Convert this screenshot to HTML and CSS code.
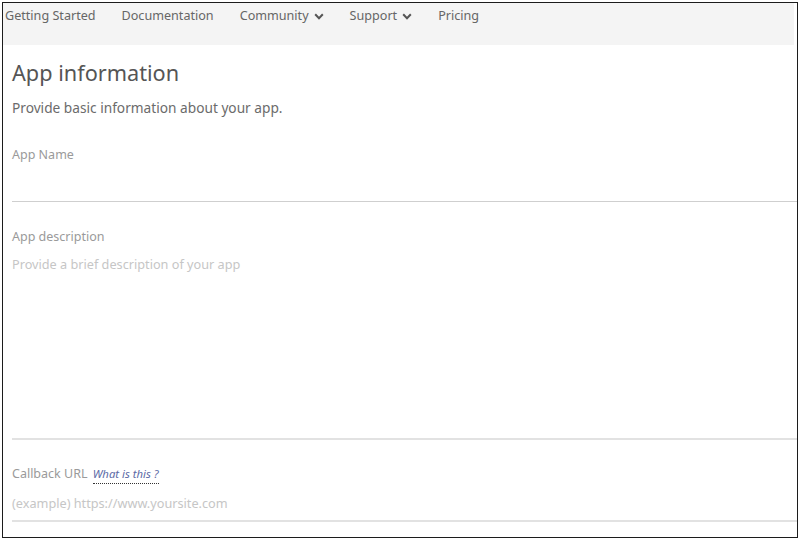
FILE: index.html
```html
<!DOCTYPE html>
<html lang="en">
<head>
<meta charset="utf-8">
<title>App information</title>
<link rel="stylesheet" href="styles.css">
</head>
<body>
<div class="frame">
  <nav class="nav">
    <a class="nav-item">Getting Started</a>
    <a class="nav-item">Documentation</a>
    <a class="nav-item">Community <svg class="chev" viewBox="0 0 10 7" width="10" height="7"><polyline points="1.2,1.3 5,5.2 8.8,1.3" fill="none" stroke="#555" stroke-width="2"/></svg></a>
    <a class="nav-item">Support <svg class="chev" viewBox="0 0 10 7" width="10" height="7"><polyline points="1.2,1.3 5,5.2 8.8,1.3" fill="none" stroke="#555" stroke-width="2"/></svg></a>
    <a class="nav-item">Pricing</a>
  </nav>
  <main class="main">
    <h1 class="title">App information</h1>
    <p class="subtitle">Provide basic information about your app.</p>
    <div class="field field-name">
      <label class="label">App Name</label>
      <div class="input input-name"></div>
    </div>
    <div class="field field-desc">
      <label class="label">App description</label>
      <div class="input input-desc"><span class="placeholder">Provide a brief description of your app</span></div>
    </div>
    <div class="field field-url">
      <label class="label">Callback URL <span class="help">What is this ?</span></label>
      <div class="input input-url"><span class="placeholder">(example) https://www.yoursite.com</span></div>
    </div>
  </main>
</div>
</body>
</html>
```
FILE: styles.css
```css
html, body {
  margin: 0;
  padding: 0;
  background: #ffffff;
}
body {
  font-family: "Noto Sans", "Open Sans", sans-serif;
  color: #666;
}
.frame {
  margin: 2px 0 0 2px;
  width: 796px;
  height: 536px;
  border: 1px solid #1c1c1c;
  box-sizing: border-box;
  background: #fff;
}
.nav {
  height: 42px;
  margin-right: 3px;
  background: #f4f4f4;
  display: flex;
  align-items: flex-start;
  gap: 26px;
  padding: 3px 0 0 2px;
  box-sizing: border-box;
}
.nav-item {
  font-size: 12.6px;
  line-height: 20px;
  color: #666;
  display: flex;
  align-items: center;
  gap: 5px;
}
.chev {
  display: block;
}
.main {
  padding: 0 0 0 9px;
}
.title {
  margin: 14px 0 0 0;
  font-size: 21.7px;
  line-height: 28px;
  font-weight: 400;
  color: #555;
}
.subtitle {
  margin: 11px 0 0 0;
  font-size: 13.7px;
  line-height: 20px;
  color: #6b6b6b;
}
.field-name { margin-top: 28px; }
.field-desc { margin-top: 26px; }
.field-url { margin-top: 25px; }
.label {
  display: block;
  font-size: 12.5px;
  line-height: 18px;
  color: #9a9a9a;
}
.input {
  border-bottom: 1px solid #cfcfcf;
  font-size: 12.7px;
  line-height: 18px;
}
.input-name { height: 37px; }
.input-desc {
  height: 183px;
  padding-top: 9px;
  border-bottom: 2px solid #e2e2e2;
}
.input-url {
  padding: 11px 0 8px;
  border-bottom: 2px solid #e2e2e2;
}
.placeholder {
  color: #c6c6c6;
}
.help {
  font-style: italic;
  font-size: 11.3px;
  color: #5b6aa6;
  border-bottom: 1px dotted #333;
  padding-bottom: 2px;
  margin-left: 2px;
}
```
